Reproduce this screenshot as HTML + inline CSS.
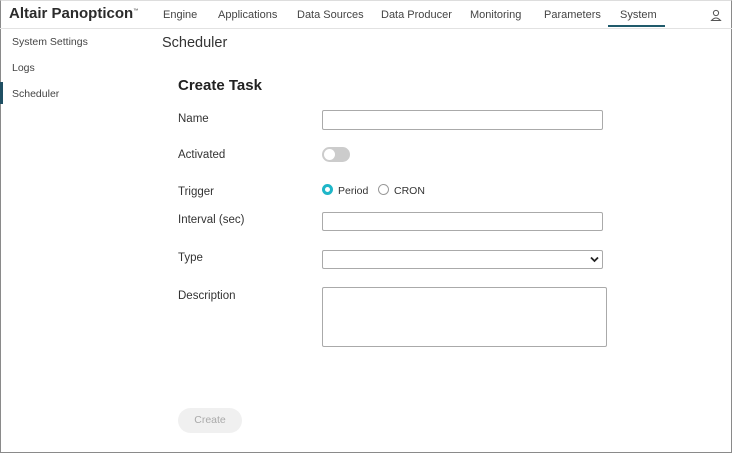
<!DOCTYPE html>
<html><head><style>
*{margin:0;padding:0;box-sizing:border-box}
body{width:732px;height:453px;position:relative;background:#fff;font-family:"Liberation Sans",sans-serif;color:#333;overflow:hidden}
.a{position:absolute;white-space:nowrap}
.frame{position:absolute;left:0;top:0;width:732px;height:453px;border:1px solid #8a8a8a;border-top-color:#ddd}
.nav{font-size:11px;color:#444;top:9px}
.lab{font-size:11.5px;color:#333;left:178px}
.inp{position:absolute;border:1px solid #aaa;border-radius:2px;background:#fff}
</style></head><body>
<div class="frame"></div>
<div class="a" style="left:0;top:28px;width:732px;height:1px;background:#e2e2e2"></div>
<div class="a" style="left:9px;top:5px;font-size:15px;font-weight:bold;color:#2b2b2b">Altair Panopticon<sup style="font-size:5px;font-weight:normal">™</sup></div>
<div class="a nav" style="left:163px">Engine</div>
<div class="a nav" style="left:218px">Applications</div>
<div class="a nav" style="left:297px">Data Sources</div>
<div class="a nav" style="left:381px">Data Producer</div>
<div class="a nav" style="left:470px">Monitoring</div>
<div class="a nav" style="left:544px">Parameters</div>
<div class="a nav" style="left:620px">System</div>
<div class="a" style="left:608px;top:25px;width:57px;height:2px;background:#1f5a6b"></div>
<svg class="a" style="left:710px;top:9px" width="12" height="12" viewBox="0 0 12 12"><circle cx="6" cy="4" r="2.6" fill="none" stroke="#555" stroke-width="1"/><path d="M1.5 11.5 Q6 6.5 10.5 11.5 Z" fill="none" stroke="#555" stroke-width="1"/></svg>
<div class="a" style="left:12px;top:36px;font-size:10.5px;color:#444">System Settings</div>
<div class="a" style="left:12px;top:62px;font-size:10.5px;color:#444">Logs</div>
<div class="a" style="left:12px;top:88px;font-size:10.5px;color:#444">Scheduler</div>
<div class="a" style="left:0;top:82px;width:3px;height:22px;background:#1f4f63"></div>
<div class="a" style="left:162px;top:35px;font-size:14.5px;color:#333">Scheduler</div>
<div class="a" style="left:178px;top:77px;font-size:15px;font-weight:bold;color:#222">Create Task</div>
<div class="a lab" style="top:113px">Name</div>
<div class="inp" style="left:322px;top:110px;width:281px;height:20px"></div>
<div class="a lab" style="top:149px">Activated</div>
<div class="a" style="left:322px;top:147px;width:28px;height:15px;border-radius:8px;background:#ccc"></div>
<div class="a" style="left:324px;top:149px;width:11px;height:11px;border-radius:6px;background:#fff"></div>
<div class="a lab" style="top:186px">Trigger</div>
<div class="a" style="left:322px;top:184px;width:11px;height:11px;border-radius:6px;border:3px solid #1fb6c8"></div>
<div class="a" style="left:338px;top:185px;font-size:10.5px">Period</div>
<div class="a" style="left:378px;top:184px;width:11px;height:11px;border-radius:6px;border:1px solid #999"></div>
<div class="a" style="left:394px;top:185px;font-size:10.5px">CRON</div>
<div class="a lab" style="top:214px">Interval (sec)</div>
<div class="inp" style="left:322px;top:212px;width:281px;height:19px"></div>
<div class="a lab" style="top:252px">Type</div>
<div class="inp" style="left:322px;top:250px;width:281px;height:19px"></div>
<svg class="a" style="left:590px;top:256px" width="9" height="7" viewBox="0 0 9 7"><path d="M1 1.5 L4.5 5 L8 1.5" fill="none" stroke="#222" stroke-width="1.8"/></svg>
<div class="a lab" style="top:290px">Description</div>
<div class="inp" style="left:322px;top:287px;width:285px;height:60px"></div>
<div class="a" style="left:178px;top:408px;width:64px;height:25px;border-radius:13px;background:#f0f0f0;color:#aaa;font-size:10.5px;text-align:center;line-height:25px">Create</div>
</body></html>
